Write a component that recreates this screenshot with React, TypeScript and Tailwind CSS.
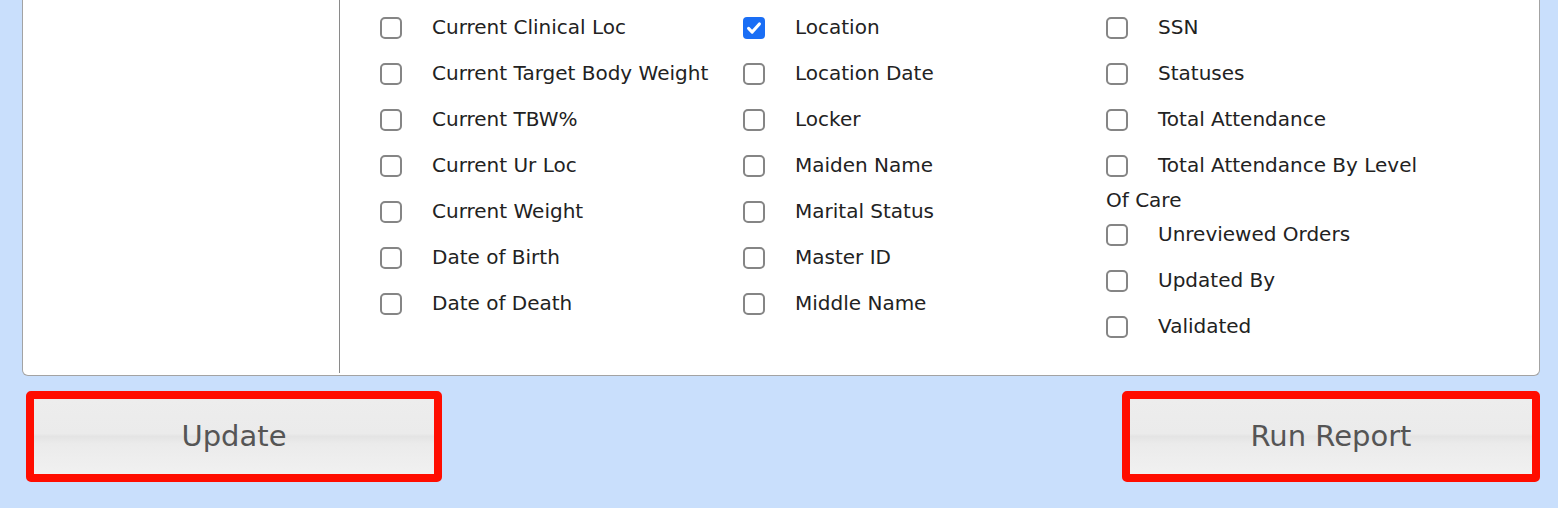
const columns: { label: string; checked?: boolean }[][] = [
    [
        { label: 'Current Clinical Loc' },
        { label: 'Current Target Body Weight' },
        { label: 'Current TBW%' },
        { label: 'Current Ur Loc' },
        { label: 'Current Weight' },
        { label: 'Date of Birth' },
        { label: 'Date of Death' },
    ],
    [
        { label: 'Location', checked: true },
        { label: 'Location Date' },
        { label: 'Locker' },
        { label: 'Maiden Name' },
        { label: 'Marital Status' },
        { label: 'Master ID' },
        { label: 'Middle Name' },
    ],
    [
        { label: 'SSN' },
        { label: 'Statuses' },
        { label: 'Total Attendance' },
        { label: 'Total Attendance By Level Of Care' },
        { label: 'Unreviewed Orders' },
        { label: 'Updated By' },
        { label: 'Validated' },
    ],
]

function Checkbox({ checked }: { checked?: boolean }) {
    if (checked) {
        return (
            <span className="inline-flex items-center justify-center align-middle w-[22px] h-[22px] my-[12px] mr-[30px] rounded-[4px] bg-[#1a6ef5]">
                <svg width="18" height="18" viewBox="0 0 16 16">
                    <path d="M3.2 8.4 L6.4 11.6 L12.8 4.4" fill="none" stroke="#fff" strokeWidth="2.8" strokeLinecap="round" strokeLinejoin="round" />
                </svg>
            </span>
        )
    }
    return (
        <span className="inline-block align-middle w-[22px] h-[22px] my-[12px] mr-[30px] rounded-[5px] border-2 border-[#858585] bg-white" />
    )
}

function ReportButton({ label, width }: { label: string; width: string }) {
    return (
        <button className={`${width} h-[91px] border-8 border-[#ff0d00] rounded-[5px] bg-[linear-gradient(to_bottom,#ededed_0%,#ebebeb_46%,#e4e4e4_50%,#ebebeb_60%,#f1f1f1_100%)] text-[29px] text-[#555] font-['DejaVu_Sans',sans-serif]`}>
            {label}
        </button>
    )
}

export default function App() {
    return (
        <div className="min-h-screen bg-[#c9dffc] font-['DejaVu_Sans',sans-serif] overflow-hidden">
            <div className="ml-[22px] w-[1518px] h-[376px] bg-white border border-t-0 border-[#a3a3a3] rounded-b-[6px] flex">
                <div className="w-[317px] border-r border-[#8a8a8a] mb-[2px]" />
                <div className="pl-[40px] pt-[5px] flex">
                    {columns.map((col, i) => (
                        <div key={i} className="w-[363px] pr-[24px]">
                            {col.map(item => (
                                <div key={item.label} className="text-[20px] leading-[23px] text-[#222]">
                                    <Checkbox checked={item.checked} />
                                    {item.label}
                                </div>
                            ))}
                        </div>
                    ))}
                </div>
            </div>
            <div className="flex justify-between pl-[26px] pr-[18px] mt-[15px]">
                <ReportButton label="Update" width="w-[416px]" />
                <ReportButton label="Run Report" width="w-[418px]" />
            </div>
        </div>
    )
}
